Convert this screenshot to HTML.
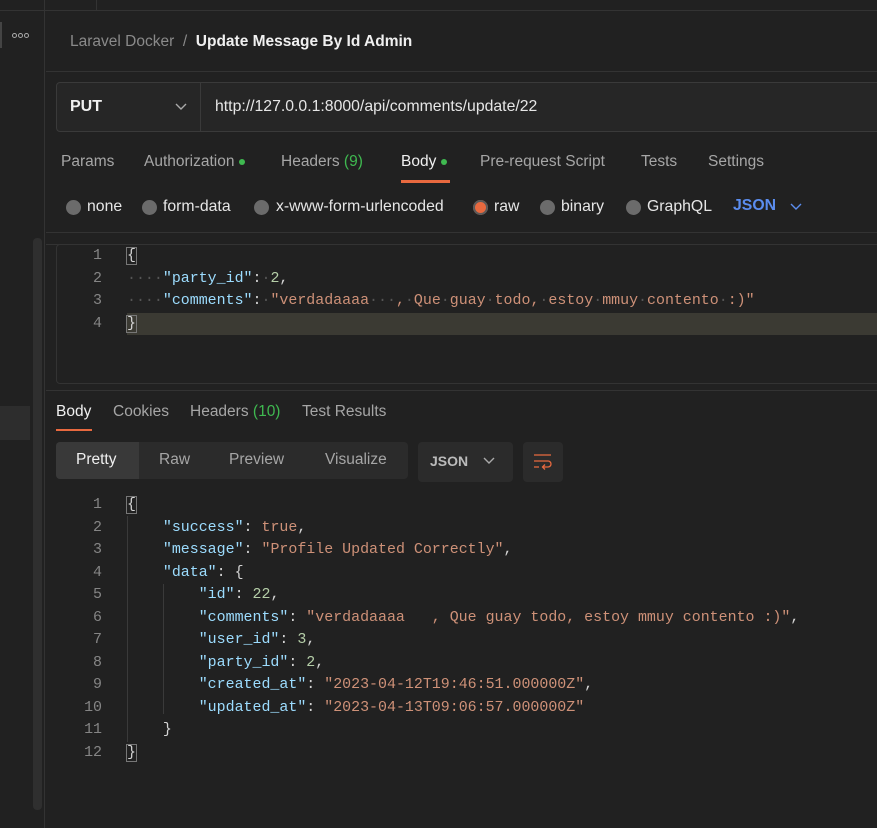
<!DOCTYPE html>
<html><head><meta charset="utf-8"><style>
*{margin:0;padding:0;box-sizing:border-box}
body{width:877px;height:828px;overflow:hidden;background:#212121;font-family:"Liberation Sans",sans-serif;color:#d4d4d4;position:relative}
.a{position:absolute}
.mono{font-family:"Liberation Mono",monospace;font-size:14.95px;white-space:pre}
.k{color:#9cdcfe}.s{color:#ce9178}.n{color:#b5cea8}.p{color:#d4d4d4}.d{color:#555}
.ln{color:#858585;text-align:right;width:60px}
.tab{font-size:15.5px;color:#a6a6a6;white-space:nowrap}
.dot{display:inline-block;width:6px;height:6px;border-radius:50%;background:#3fb950;vertical-align:middle;margin-left:5px}
.rad{position:absolute;width:15px;height:15px;border-radius:50%;background:#6b6b6b;top:200px}
.rt{position:absolute;top:198px;font-size:15.8px;color:#e6e6e6;white-space:nowrap}
.o{position:absolute;width:5px;height:5px;border:1.3px solid #aaa;border-radius:50%;top:33px}
</style></head><body>
<div class="a" style="left:0;top:0;width:45px;height:828px;background:#212121;border-right:1px solid #333"></div>
<div class="a" style="left:0;top:10px;width:877px;height:1px;background:#333"></div>
<div class="a" style="left:96px;top:0;width:1px;height:10px;background:#333"></div>
<div class="a" style="left:0;top:22px;width:2px;height:26px;background:#444"></div>
<div class="o" style="left:12px"></div><div class="o" style="left:18px"></div><div class="o" style="left:24px"></div>
<div class="a" style="left:0;top:406px;width:30px;height:34px;background:#2d2d2d"></div>
<div class="a" style="left:33px;top:238px;width:9px;height:572px;background:#2f2f2f;border-radius:4px"></div>
<div class="a" style="left:70px;top:33px;font-size:15.5px;color:#8a8a8a;white-space:nowrap">Laravel Docker &nbsp;/&nbsp; <b style="color:#f0f0f0">Update Message By Id Admin</b></div>
<div class="a" style="left:46px;top:71px;width:831px;height:1px;background:#333"></div>
<div class="a" style="left:56px;top:82px;width:830px;height:50px;border:1px solid #3a3a3a;border-radius:4px;background:#262626"></div>
<div class="a" style="left:200px;top:83px;width:1px;height:48px;background:#3a3a3a"></div>
<div class="a" style="left:70px;top:98px;font-size:16px;font-weight:bold;color:#f0f0f0">PUT</div>
<svg class="a" style="left:174px;top:102px" width="14" height="10"><path d="M2 2 L7 7 L12 2" stroke="#aaa" stroke-width="1.4" fill="none"/></svg>
<div class="a" style="left:215px;top:98px;font-size:15.8px;color:#e6e6e6">http://127.0.0.1:8000/api/comments/update/22</div>
<div class="a tab" style="left:61px;top:153px">Params</div>
<div class="a tab" style="left:144px;top:153px">Authorization<span class="dot"></span></div>
<div class="a tab" style="left:281px;top:153px">Headers <span style="color:#3fb950">(9)</span></div>
<div class="a tab" style="left:401px;top:153px;color:#f0f0f0">Body<span class="dot"></span></div>
<div class="a" style="left:401px;top:180px;width:49px;height:3px;background:#e8693f"></div>
<div class="a tab" style="left:480px;top:153px">Pre-request Script</div>
<div class="a tab" style="left:641px;top:153px">Tests</div>
<div class="a tab" style="left:708px;top:153px">Settings</div>
<div class="rad" style="left:66px"></div><div class="rt" style="left:87px">none</div>
<div class="rad" style="left:142px"></div><div class="rt" style="left:163px">form-data</div>
<div class="rad" style="left:254px"></div><div class="rt" style="left:276px">x-www-form-urlencoded</div>
<div class="rad" style="left:473px;background:#e8693f;box-shadow:0 0 0 2px #5a5a5a inset"></div><div class="rt" style="left:494px">raw</div>
<div class="rad" style="left:540px"></div><div class="rt" style="left:561px">binary</div>
<div class="rad" style="left:626px"></div><div class="rt" style="left:647px">GraphQL</div>
<div class="rt" style="left:733px;color:#5b8def;font-weight:bold;top:197px">JSON</div>
<svg class="a" style="left:789px;top:202px" width="14" height="10"><path d="M2 2 L7 7 L12 2" stroke="#5b8def" stroke-width="1.4" fill="none"/></svg>
<div class="a" style="left:46px;top:232px;width:831px;height:1px;background:#333"></div>
<div class="a" style="left:46px;top:244px;width:831px;height:1px;background:#333"></div>
<div class="a" style="left:56px;top:244px;width:830px;height:140px;border:1px solid #333;border-radius:4px"></div>
<div class="a" style="left:127px;top:313px;width:750px;height:22px;background:#3b3a33"></div>
<div class="a mono ln" style="left:42px;top:245px;line-height:22.5px">1
2
3
4</div>
<div class="a mono" style="left:127px;top:245px;line-height:22.5px"><span class="p" style="outline:1px solid #777">{</span>
<span class="d">····</span><span class="k">"party_id"</span><span class="p">:</span><span class="d">·</span><span class="n">2</span><span class="p">,</span>
<span class="d">····</span><span class="k">"comments"</span><span class="p">:</span><span class="d">·</span><span class="s">"verdadaaaa<span class="d">···</span>,<span class="d">·</span>Que<span class="d">·</span>guay<span class="d">·</span>todo,<span class="d">·</span>estoy<span class="d">·</span>mmuy<span class="d">·</span>contento<span class="d">·</span>:)"</span>
<span class="p" style="outline:1px solid #777">}</span></div>
<div class="a" style="left:46px;top:390px;width:831px;height:1px;background:#333"></div>
<div class="a tab" style="left:56px;top:403px;color:#f0f0f0">Body</div>
<div class="a" style="left:56px;top:429px;width:36px;height:2px;background:#e8693f"></div>
<div class="a tab" style="left:113px;top:403px">Cookies</div>
<div class="a tab" style="left:190px;top:403px">Headers <span style="color:#3fb950">(10)</span></div>
<div class="a tab" style="left:302px;top:403px">Test Results</div>
<div class="a" style="left:56px;top:442px;width:352px;height:37px;background:#2b2b2b;border-radius:4px"></div>
<div class="a" style="left:56px;top:442px;width:83px;height:37px;background:#393939;border-radius:4px 0 0 4px"></div>
<div class="a tab" style="left:76px;top:451px;color:#f0f0f0">Pretty</div>
<div class="a tab" style="left:159px;top:451px">Raw</div>
<div class="a tab" style="left:229px;top:451px">Preview</div>
<div class="a tab" style="left:325px;top:451px">Visualize</div>
<div class="a" style="left:418px;top:442px;width:95px;height:40px;background:#2b2b2b;border-radius:4px"></div>
<div class="a" style="left:430px;top:453px;font-size:14px;font-weight:bold;color:#bbb">JSON</div>
<svg class="a" style="left:482px;top:456px" width="14" height="10"><path d="M2 2 L7 7 L12 2" stroke="#aaa" stroke-width="1.4" fill="none"/></svg>
<div class="a" style="left:523px;top:442px;width:40px;height:40px;background:#2b2b2b;border-radius:4px"></div>
<svg class="a" style="left:532px;top:451px" width="22" height="22"><path d="M2 4 H19 M2 10 H16 a3 3 0 0 1 0 6 H11 M13 13.5 L10.5 16 L13 18.5 M2 16 H7" stroke="#e8693f" stroke-width="1.3" fill="none"/></svg>
<div class="a" style="left:127px;top:516px;width:1px;height:226px;background:#3a3a3a"></div>
<div class="a" style="left:163px;top:584px;width:1px;height:130px;background:#3a3a3a"></div>
<div class="a mono ln" style="left:42px;top:494px;line-height:22.5px">1
2
3
4
5
6
7
8
9
10
11
12</div>
<div class="a mono" style="left:127px;top:494px;line-height:22.5px"><span class="p" style="outline:1px solid #777">{</span>
    <span class="k">"success"</span>: <span class="s">true</span>,
    <span class="k">"message"</span>: <span class="s">"Profile Updated Correctly"</span>,
    <span class="k">"data"</span>: {
        <span class="k">"id"</span>: <span class="n">22</span>,
        <span class="k">"comments"</span>: <span class="s">"verdadaaaa   , Que guay todo, estoy mmuy contento :)"</span>,
        <span class="k">"user_id"</span>: <span class="n">3</span>,
        <span class="k">"party_id"</span>: <span class="n">2</span>,
        <span class="k">"created_at"</span>: <span class="s">"2023-04-12T19:46:51.000000Z"</span>,
        <span class="k">"updated_at"</span>: <span class="s">"2023-04-13T09:06:57.000000Z"</span>
    }
<span class="p" style="outline:1px solid #777">}</span></div>
</body></html>
